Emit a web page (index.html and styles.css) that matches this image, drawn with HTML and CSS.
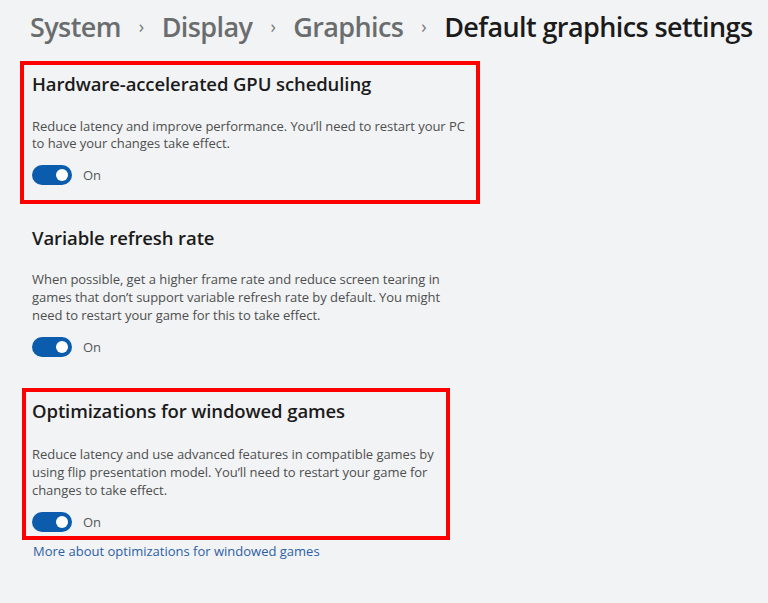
FILE: index.html
```html
<!DOCTYPE html>
<html lang="en">
<head>
<meta charset="utf-8">
<title>Default graphics settings</title>
<link rel="stylesheet" href="styles.css">
</head>
<body>
<div class="page">
  <nav class="crumbs">
    <span class="crumb">System</span>
    <span class="sep">›</span>
    <span class="crumb">Display</span>
    <span class="sep">›</span>
    <span class="crumb">Graphics</span>
    <span class="sep">›</span>
    <span class="crumb current">Default graphics settings</span>
  </nav>

  <section class="setting boxed box-gpu">
    <h2 class="title">Hardware-accelerated GPU scheduling</h2>
    <p class="desc">Reduce latency and improve performance. You’ll need to restart your PC<br>to have your changes take effect.</p>
    <div class="toggle-row">
      <span class="toggle"><span class="knob"></span></span>
      <span class="state">On</span>
    </div>
  </section>

  <section class="setting plain">
    <h2 class="title">Variable refresh rate</h2>
    <p class="desc">When possible, get a higher frame rate and reduce screen tearing in<br>games that don’t support variable refresh rate by default. You might<br>need to restart your game for this to take effect.</p>
    <div class="toggle-row">
      <span class="toggle"><span class="knob"></span></span>
      <span class="state">On</span>
    </div>
  </section>

  <section class="setting boxed box-win">
    <h2 class="title">Optimizations for windowed games</h2>
    <p class="desc">Reduce latency and use advanced features in compatible games by<br>using flip presentation model. You’ll need to restart your game for<br>changes to take effect.</p>
    <div class="toggle-row">
      <span class="toggle"><span class="knob"></span></span>
      <span class="state">On</span>
    </div>
  </section>

  <a class="more" href="#">More about optimizations for windowed games</a>
</div>
</body>
</html>
```

FILE: styles.css
```css
html, body {
  margin: 0;
  padding: 0;
  background: #f2f3f4;
}

body {
  font-family: "Open Sans", "Noto Sans", sans-serif;
  color: #1b1b1b;
  width: 768px;
  height: 603px;
  overflow: hidden;
}

.page {
  padding-top: 10px;
}

.crumbs {
  display: flex;
  align-items: baseline;
  padding-left: 30px;
  font-size: 27px;
  line-height: 34px;
  font-weight: 600;
  letter-spacing: -0.6px;
  white-space: nowrap;
}

.crumb {
  color: #6a6d6e;
}

.crumb.current {
  color: #1b1b1b;
}

.sep {
  color: #767a7b;
  font-size: 18px;
  font-weight: 400;
  margin: 0 18px 0 18px;
  position: relative;
  top: -4px;
}

.setting {
  display: flex;
  flex-direction: column;
  align-items: flex-start;
}

.boxed {
  border: 4px solid #ff0000;
  box-sizing: border-box;
}

.box-gpu {
  margin: 14px 0 0 20px;
  width: 460px;
  padding: 8px 0 15px 8px;
}

.box-gpu .desc {
  margin-top: 23px;
  line-height: 17px;
}

.plain {
  margin: 23px 0 0 32px;
}

.plain .desc {
  margin-top: 21px;
}

.box-win {
  margin: 31px 0 0 22px;
  width: 428px;
  padding: 8px 0 4px 6px;
}

.box-win .desc {
  margin-top: 23px;
}

.title {
  margin: 0;
  font-size: 18.5px;
  line-height: 22px;
  font-weight: 600;
  color: #1b1b1b;
  letter-spacing: -0.1px;
}

.desc {
  margin: 22px 0 0 0;
  font-size: 13px;
  line-height: 18px;
  color: #4d4f50;
  white-space: nowrap;
  letter-spacing: -0.05px;
}

.toggle-row {
  margin-top: 13px;
  display: flex;
  align-items: center;
}

.toggle {
  width: 40px;
  height: 20px;
  border-radius: 10px;
  background: #0b5cad;
  display: flex;
  align-items: center;
  justify-content: flex-end;
  box-sizing: border-box;
  padding-right: 4px;
}

.knob {
  width: 12px;
  height: 12px;
  border-radius: 50%;
  background: #ffffff;
}

.state {
  margin-left: 11px;
  font-size: 13px;
  color: #55585a;
}

.more {
  display: block;
  margin: 2px 0 0 33px;
  font-size: 13px;
  line-height: 18px;
  color: #2d5fa5;
  text-decoration: none;
}
```
